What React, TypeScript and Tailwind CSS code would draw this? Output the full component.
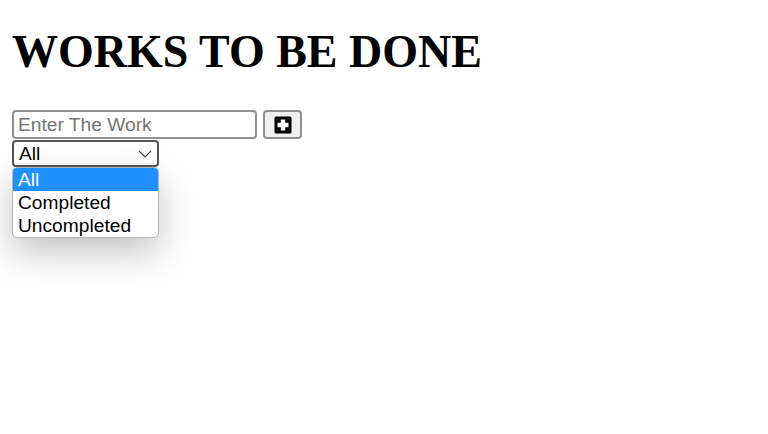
import React from 'react';

const options = ['All', 'Completed', 'Uncompleted'];

const App: React.FC = () => {
  return (
    <div className="min-h-[434px] bg-white px-3 font-['Liberation_Sans',sans-serif] text-black">
      <h1 className="pt-[24px] pb-[31px] font-['Liberation_Serif',serif] text-[46px] font-bold leading-[55px]">
        WORKS TO BE DONE
      </h1>

      <div className="flex items-stretch gap-[6px]">
        <input
          type="text"
          placeholder="Enter The Work"
          className="h-[29px] w-[245px] rounded-[4px] border-2 border-[#8f8f8f] px-1 text-[19.2px] outline-none placeholder:text-[#757575]"
        />
        <button className="flex h-[29px] w-[39px] items-center justify-center rounded-[4px] border-2 border-[#8f8f8f] bg-[#efefef]">
          <svg width="18" height="18" viewBox="0 0 18 18">
            <rect x="0.5" y="0.5" width="17" height="17" rx="1.5" fill="#000" />
            <path d="M6.8 3.5h4.4v3.3h3.3v4.4h-3.3v3.3H6.8v-3.3H3.5V6.8h3.3z" fill="#fff" />
          </svg>
        </button>
      </div>

      <div className="relative mt-px w-[147px]">
        <div className="flex h-[27px] items-center justify-between rounded-[4px] border-2 border-[#555555] pl-[5px] pr-[5px] pt-[2px] text-[19.2px]">
          <span>All</span>
          <svg width="14" height="8" viewBox="0 0 14 8" fill="none" className="-mt-[2px]">
            <path d="M1 1l6 6 6-6" stroke="#444" strokeWidth="1.1" />
          </svg>
        </div>

        <ul className="absolute left-0 top-[27px] w-full overflow-hidden rounded-[5px] border border-[#b5b5b5] bg-white text-[19.2px] leading-[23px] shadow-[0_14px_36px_rgba(0,0,0,0.24)]">
          {options.map((o, i) => (
            <li key={o} className={i === 0 ? 'bg-[#1e90ff] pl-[5px] text-white' : 'pl-[5px]'}>
              {o}
            </li>
          ))}
        </ul>
      </div>
    </div>
  );
};

export default App;
